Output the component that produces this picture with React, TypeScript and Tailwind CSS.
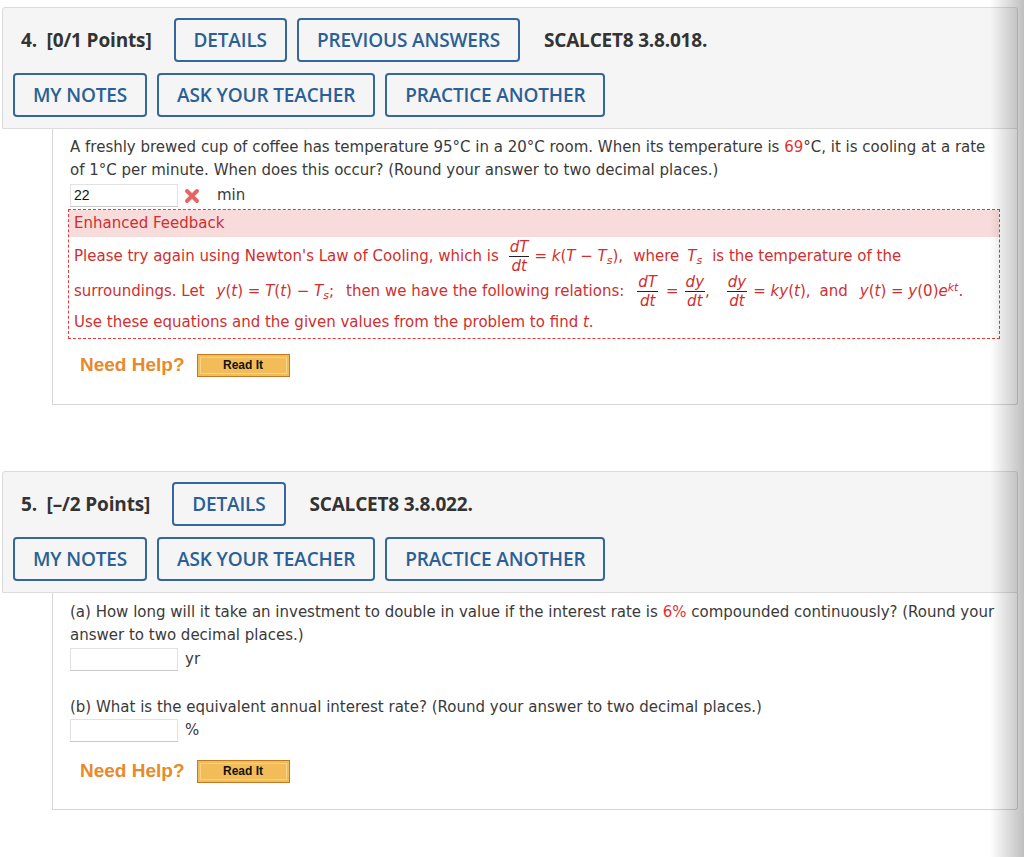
import React from 'react';

// Shared font stacks
const ui = { fontFamily: '"Open Sans", "Liberation Sans", sans-serif' };
const body = { fontFamily: '"DejaVu Sans", Verdana, sans-serif' };
const arial = { fontFamily: '"Liberation Sans", Arial, sans-serif' };

const Btn = ({ label }: { label: string }) => (
  <button
    style={ui}
    className="h-[44px] px-[18px] rounded-[4px] border-2 border-[#36679b] text-[#2b5f95] text-[19px] font-semibold tracking-[-0.15px] bg-transparent">
    {label}
  </button>
);

const Frac = ({ num, den }: { num: React.ReactNode; den: React.ReactNode }) => (
  <span className="inline-flex flex-col items-center align-middle leading-none text-[15px] italic">
    <span className="border-b border-[#222] px-[1px] pb-[1px]">{num}</span>
    <span className="pt-[2px]">{den}</span>
  </span>
);

const Ts = () => (
  <span>
    <i>T</i>
    <sub className="italic text-[11px]">s</sub>
  </span>
);

const Field = ({ value = '' }: { value?: string }) => (
  <div
    style={arial}
    className="w-[108px] h-[23px] bg-white border border-[#e2e2e2] border-b-[#c9c9c9] px-[3px] text-[14px] text-[#111] leading-[21px]">
    {value}
  </div>
);

const Help = () => (
  <div className="flex items-center gap-[12px] pl-[10px]">
    <span style={arial} className="text-[19px] font-bold text-[#e8892c]">
      Need Help?
    </span>
    <span
      style={arial}
      className="w-[93px] h-[23px] border border-[#c07a26] bg-[#f2bd58] p-[2px] flex">
      <span className="flex-1 border border-[#f7d38a] flex items-center justify-center text-[12px] font-bold text-[#111]">
        Read It
      </span>
    </span>
  </div>
);

const Header = ({
  num,
  points,
  code,
  extra,
}: {
  num: string;
  points: string;
  code: string;
  extra?: string;
}) => (
  <div className="bg-[#f5f5f5] border border-[#dcdcdc] rounded-t-[3px] pt-[10px] pb-[11px] pl-[10px] flex flex-col gap-[11px]">
    <div className="flex items-center">
      <span style={ui} className="ml-[8px] text-[19px] font-bold text-[#333] tracking-[-0.15px] whitespace-pre">
        {num}  {points}
      </span>
      <div className="flex gap-[10px] ml-[22px]">
        <Btn label="DETAILS" />
        {extra && <Btn label={extra} />}
      </div>
      <span style={ui} className="ml-[24px] text-[19px] font-bold text-[#333] tracking-[-0.2px]">
        {code}
      </span>
    </div>
    <div className="flex gap-[10px]">
      <Btn label="MY NOTES" />
      <Btn label="ASK YOUR TEACHER" />
      <Btn label="PRACTICE ANOTHER" />
    </div>
  </div>
);

export default function App() {
  return (
    <div className="relative w-[1024px] h-[857px] bg-white overflow-hidden text-[#3a3a3a]">
      <div className="pt-[7px] pl-[2px] w-[1018px] flex flex-col">
        {/* Question 4 */}
        <Header num="4." points="[0/1 Points]" extra="PREVIOUS ANSWERS" code="SCALCET8 3.8.018." />
        <div
          style={body}
          className="ml-[50px] border-l border-r border-b border-[#d6d6d6] rounded-br-[3px] pl-[17px] pr-[16px] pt-[7px] h-[276px] text-[15px]">
          <p className="leading-[23px] whitespace-nowrap">
            A freshly brewed cup of coffee has temperature 95°C in a 20°C room. When its temperature is{' '}
            <span className="text-[#e3312b]">69</span>°C, it is cooling at a rate
            <br />
            of 1°C per minute. When does this occur? (Round your answer to two decimal places.)
          </p>
          <div className="flex items-center mt-[2px]">
            <Field value="22" />
            <svg width="16" height="16" viewBox="0 0 16 16" className="ml-[6px]">
              <path d="M3 3 L13 13 M13 3 L3 13" stroke="#e46767" strokeWidth="4" strokeLinecap="round" />
            </svg>
            <span className="ml-[17px]">min</span>
          </div>
          {/* Enhanced feedback */}
          <div className="mt-[2px] -ml-[2px] mr-[1px] border border-dashed border-[#e23b3b] text-[#cf2f2f] whitespace-nowrap">
            <div className="h-[27px] bg-[#f8dcdc] flex items-center pl-[5px]">Enhanced Feedback</div>
            <div className="h-[37px] flex items-center pl-[5px] pt-[2px]">
              <span>Please try again using Newton's Law of Cooling, which is</span>
              <span className="ml-[10px]">
                <Frac num="dT" den="dt" />
              </span>
              <span className="ml-[5px]">
                = <i>k</i>(<i>T</i> − <Ts />
                ),
              </span>
              <span className="ml-[10px]">where</span>
              <span className="ml-[8px]">
                <Ts />
              </span>
              <span className="ml-[10px]">is the temperature of the</span>
            </div>
            <div className="h-[35px] flex items-center pl-[5px]">
              <span>surroundings. Let</span>
              <span className="ml-[12px]">
                <i>y</i>(<i>t</i>) = <i>T</i>(<i>t</i>) − <Ts />;
              </span>
              <span className="ml-[12px]">then we have the following relations:</span>
              <span className="ml-[13px]">
                <Frac num="dT" den="dt" />
              </span>
              <span className="ml-[8px]">=</span>
              <span className="ml-[6px]">
                <Frac num="dy" den="dt" />
              </span>
              <span>,</span>
              <span className="ml-[17px]">
                <Frac num="dy" den="dt" />
              </span>
              <span className="ml-[6px]">
                = <i>ky</i>(<i>t</i>),
              </span>
              <span className="ml-[9px]">and</span>
              <span className="ml-[12px]">
                <i>y</i>(<i>t</i>) = <i>y</i>(0)<i>e</i>
                <sup className="italic text-[11px]">kt</sup>.
              </span>
            </div>
            <div className="h-[29px] flex items-center pl-[5px] pb-[3px]">
              Use these equations and the given values from the problem to find&nbsp;<i>t</i>.
            </div>
          </div>
          <div className="mt-[12px]">
            <Help />
          </div>
        </div>

        <div className="h-[66px]" />

        {/* Question 5 */}
        <Header num="5." points="[–/2 Points]" code="SCALCET8 3.8.022." />
        <div
          style={body}
          className="ml-[50px] border-l border-r border-b border-[#d6d6d6] rounded-br-[3px] pl-[17px] pr-[16px] pt-[8px] h-[217px] text-[15px]">
          <p className="leading-[23px] whitespace-nowrap">
            (a) How long will it take an investment to double in value if the interest rate is{' '}
            <span className="text-[#e3312b]">6%</span> compounded continuously? (Round your
            <br />
            answer to two decimal places.)
          </p>
          <div className="flex items-center mt-[1px]">
            <Field />
            <span className="ml-[7px]">yr</span>
          </div>
          <p className="leading-[23px] mt-[25px]">
            (b) What is the equivalent annual interest rate? (Round your answer to two decimal places.)
          </p>
          <div className="flex items-center">
            <Field />
            <span className="ml-[7px]">%</span>
          </div>
          <div className="mt-[15px]">
            <Help />
          </div>
        </div>
      </div>

      {/* page edge shading on the right */}
      <div className="pointer-events-none absolute top-0 right-0 h-full w-[34px] bg-gradient-to-r from-transparent to-black/25" />
    </div>
  );
}
